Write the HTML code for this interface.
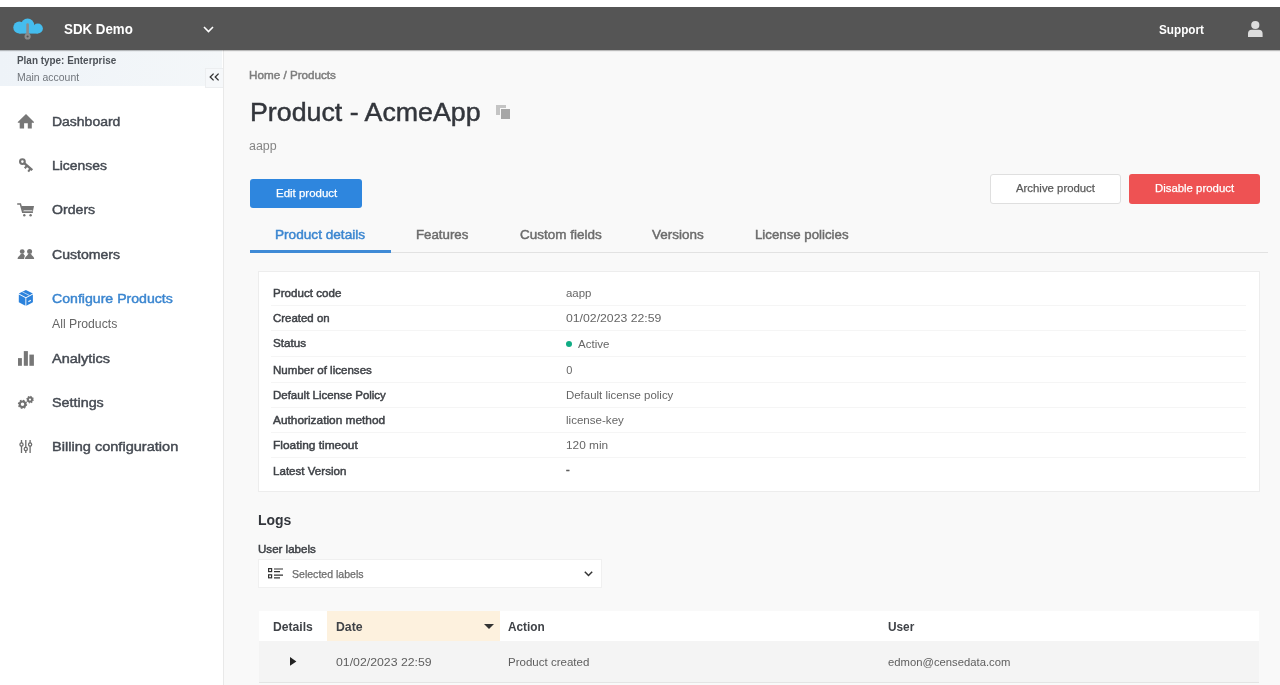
<!DOCTYPE html>
<html><head><meta charset="utf-8"><title>Product - AcmeApp</title>
<style>
*{box-sizing:border-box;margin:0;padding:0}
html,body{width:1280px;height:685px;overflow:hidden;background:#fff;font-family:"Liberation Sans",sans-serif;color:#333}
.a{position:absolute}
.t{position:absolute;white-space:nowrap;line-height:1;transform-origin:0 0}
#tx{position:absolute;left:0;top:0;width:1280px;height:685px;will-change:transform}
svg{position:absolute;overflow:visible}
.sep{position:absolute;left:270.5px;width:975.5px;height:1px;background:#f5f5f5}
</style></head><body>
<!-- layout blocks -->
<div class="a" style="left:224px;top:50px;width:1056px;height:635px;background:#f9f9f9"></div>
<div class="a" style="left:0;top:50px;width:224px;height:635px;background:#fff;border-right:1px solid #e9e9e9"></div>
<div class="a" style="left:0;top:50px;width:222px;height:36px;background:linear-gradient(90deg,#eef3f8,#f4f7f9)"></div>
<div class="a" style="left:205px;top:68px;width:18px;height:20px;background:#f6f8fa;border:1px solid #eceef0;border-right:none"></div>
<div class="a" style="left:0;top:7px;width:1280px;height:42.6px;background:#555;box-shadow:0 1px 1px rgba(0,0,0,.25)"></div>

<!-- logo -->
<svg style="left:0;top:0" width="60" height="50" viewBox="0 0 60 50">
 <g fill="#45bdee"><circle cx="19.3" cy="27.6" r="6"/><circle cx="27.6" cy="25.2" r="6.6"/><circle cx="37.8" cy="28.5" r="5.1"/><rect x="19.3" y="27" width="18.5" height="6.6"/></g>
 <rect x="26.3" y="23.2" width="2.6" height="11.8" rx="1.3" fill="#8c8c8c"/>
 <circle cx="27.6" cy="36.5" r="2.1" fill="none" stroke="#8c8c8c" stroke-width="2"/>
</svg>
<!-- header chevron -->
<svg style="left:203px;top:26px" width="11" height="7" viewBox="0 0 11 7"><path d="M1 1 L5.5 5.5 L10 1" fill="none" stroke="#fff" stroke-width="1.6"/></svg>
<!-- user icon -->
<svg style="left:1247px;top:20px" width="17" height="18" viewBox="0 0 17 18">
 <circle cx="8.3" cy="5" r="4.1" fill="#dcdcdc"/>
 <path d="M1 17 V13.5 A3.8 3.8 0 0 1 4.8 9.7 H11.8 A3.8 3.8 0 0 1 15.6 13.5 V17 Z" fill="#dcdcdc"/>
</svg>
<!-- collapse -->
<svg style="left:209px;top:73px" width="11" height="8" viewBox="0 0 11 8"><path d="M4.6 0.6 L1.2 4 L4.6 7.4 M9.6 0.6 L6.2 4 L9.6 7.4" fill="none" stroke="#333" stroke-width="1.3"/></svg>

<!-- nav icons -->
<svg style="left:0;top:100px" width="60" height="370" viewBox="0 100 60 370">
 <!-- home -->
 <path d="M26 114.1 L34 122 V122.7 H31.8 V128.6 H27.8 V123.2 H24.1 V128.6 H19.7 V122.7 H17.8 V122 Z" fill="#777"/>
 <!-- key -->
 <circle cx="22.4" cy="161.6" r="2.35" fill="none" stroke="#747474" stroke-width="2.1"/>
 <path d="M24.2 163.2 L32.3 170.2" stroke="#747474" stroke-width="2.4" fill="none"/>
 <path d="M27 165.6 L24.8 168.2 M30.5 168.7 L28.2 171.6" stroke="#747474" stroke-width="2.1" fill="none"/>
 <!-- cart -->
 <path d="M17.2 204 H20.4 L22.7 212.3 H32.9" fill="none" stroke="#757575" stroke-width="1.5"/>
 <path d="M21.2 206.1 H34 L32.9 211.6 H22.8 Z" fill="#757575"/>
 <path d="M23.6 210.5 H32.4" stroke="#d4d4d4" stroke-width="0.9" fill="none"/>
 <circle cx="24.3" cy="215.2" r="1.2" fill="#757575"/><circle cx="30.6" cy="215.2" r="1.2" fill="#757575"/>
 <!-- users -->
 <g fill="#767676">
  <circle cx="22.2" cy="251.6" r="2.4"/>
  <path d="M17.6 259 C17.8 256.2 19.9 255.9 20.8 254 H23.6 C23.9 254.8 24.4 255.3 25 255.7 C24.4 256.6 24.2 257.6 24.1 259 Z"/>
  <circle cx="29.6" cy="251.6" r="2.5"/>
  <path d="M25 259 C25.2 256.2 27.3 255.9 28.2 254 H31 C31.9 255.9 34 256.2 34.2 259 Z"/>
 </g>
 <!-- box -->
 <g fill="#2b82dc">
  <path d="M25.85 290 L32.9 293.5 L25.85 297.2 L18.8 293.5 Z"/>
  <path d="M18.8 294.6 L25.4 298 V305.8 L18.8 302.3 Z"/>
  <path d="M26.3 298 L32.9 294.6 V302.3 L26.3 305.8 Z"/>
 </g>
 <path d="M22.2 291.8 L29.4 295.4" stroke="#d5e6f8" stroke-width="0.8" fill="none"/>
 <path d="M28.4 301 L30.9 299.7 V300.9 L28.4 302.2 Z" fill="#fff"/>
 <!-- bars -->
 <g fill="#777"><rect x="18" y="358.1" width="3.9" height="7.7"/><rect x="23.8" y="351.1" width="4.1" height="14.7"/><rect x="29.4" y="354.6" width="4.5" height="11.2"/></g>
 <!-- gears -->
 <g fill="none" stroke="#727272">
  <circle cx="22.5" cy="404.3" r="2.8" stroke-width="2.1"/>
  <circle cx="22.5" cy="404.3" r="4" stroke-width="1.3" stroke-dasharray="1.57 1.571"/>
  <circle cx="30" cy="399.6" r="2.1" stroke-width="1.9"/>
  <circle cx="30" cy="399.6" r="3.2" stroke-width="1.2" stroke-dasharray="1.257 1.256"/>
 </g>
 <!-- sliders -->
 <g stroke="#6c6c6c" stroke-width="1.3" fill="none"><path d="M21.5 440.1 V453 M25.8 440.1 V453 M30.1 440.1 V453"/></g>
 <g fill="#fff" stroke="#6c6c6c" stroke-width="1.25"><circle cx="21.5" cy="444.5" r="1.6"/><circle cx="25.8" cy="448.9" r="1.6"/><circle cx="30.1" cy="444.5" r="1.6"/></g>
</svg>

<!-- copy icon -->
<div class="a" style="left:496px;top:105px;width:10px;height:10px;background:#c4c4c4"></div>
<div class="a" style="left:499.5px;top:108px;width:11.5px;height:11.5px;background:#a6a6a6;border:1px solid #f9f9f9"></div>

<!-- buttons -->
<div class="a" style="left:249.5px;top:179px;width:112.5px;height:29px;background:#2e86de;border-radius:3px"></div>
<div class="a" style="left:990px;top:174px;width:130.5px;height:29.5px;background:#fff;border:1px solid #dfdfdf;border-radius:3px"></div>
<div class="a" style="left:1129px;top:174px;width:130.5px;height:29.5px;background:#ee5253;border-radius:3px"></div>

<!-- tabs -->
<div class="a" style="left:250px;top:252px;width:1018px;height:1px;background:#e2e2e2"></div>
<div class="a" style="left:249.5px;top:250.4px;width:141px;height:2.6px;background:#3f8ad6"></div>

<!-- card -->
<div class="a" style="left:258px;top:271px;width:1002px;height:220.6px;background:#fff;border:1px solid #ededed"></div>
<div class="sep" style="top:305px"></div><div class="sep" style="top:330px"></div><div class="sep" style="top:356px"></div>
<div class="sep" style="top:382px"></div><div class="sep" style="top:407px"></div><div class="sep" style="top:432px"></div><div class="sep" style="top:457px"></div>
<div class="a" style="left:565.5px;top:341px;width:6px;height:6px;border-radius:50%;background:#10ac84"></div>

<!-- select -->
<div class="a" style="left:258px;top:559px;width:344px;height:29px;background:#fff;border:1px solid #f0f0f0"></div>
<svg style="left:268px;top:568px" width="15" height="11" viewBox="0 0 15 11">
 <g fill="none" stroke="#333" stroke-width="1.2"><rect x="0.6" y="0.6" width="3" height="3"/><rect x="0.6" y="6.8" width="3" height="3"/>
 <path d="M6 1 H15 M6 3.6 H12 M6 7.2 H15 M6 9.8 H12"/></g>
</svg>
<svg style="left:584px;top:571px" width="9" height="6" viewBox="0 0 9 6"><path d="M0.8 0.8 L4.5 4.5 L8.2 0.8" fill="none" stroke="#333" stroke-width="1.5"/></svg>

<!-- table -->
<div class="a" style="left:258.5px;top:611px;width:1000.5px;height:30px;background:#fff"></div>
<div class="a" style="left:327px;top:611px;width:173px;height:30px;background:#fdf1de"></div>
<div class="a" style="left:258.5px;top:641px;width:1000.5px;height:42px;background:#f4f4f4;border-bottom:1px solid #e4e4e4"></div>
<svg style="left:484px;top:624px" width="10" height="5" viewBox="0 0 10 5"><path d="M0 0 H10 L5 5 Z" fill="#333"/></svg>
<svg style="left:290px;top:657px" width="7" height="9" viewBox="0 0 7 9"><path d="M0 0 L6.4 4.4 L0 8.8 Z" fill="#222"/></svg>

<div id="tx">
<div class="t" style="left:64.25px;top:21px;line-height:16px;font-size:14px;color:#fff;font-weight:bold;transform:translateY(-0.10px) scaleX(0.9508);">SDK Demo</div>
<div class="t" style="left:1158.85px;top:23px;line-height:14px;font-size:12px;color:#fff;font-weight:bold;transform:translateY(-0.40px) scaleX(0.9783);">Support</div>
<div class="t" style="left:17.45px;top:55px;line-height:11px;font-size:10.2px;color:#4d5258;font-weight:bold;transform:translateY(-0.50px) scaleX(0.9735);">Plan type: Enterprise</div>
<div class="t" style="left:17.42px;top:72px;line-height:11px;font-size:10.3px;color:#70757b;transform:translateY(-0.40px) scaleX(1.0141);">Main account</div>
<div class="t" style="left:51.81px;top:114px;line-height:15px;font-size:13.3px;color:#454a52;-webkit-text-stroke:0.45px;transform:translateY(0.20px) scaleX(1.0508);">Dashboard</div>
<div class="t" style="left:51.82px;top:158px;line-height:15px;font-size:13.3px;color:#454a52;-webkit-text-stroke:0.45px;transform:translateY(0.30px) scaleX(1.0454);">Licenses</div>
<div class="t" style="left:51.80px;top:202px;line-height:15px;font-size:13.3px;color:#454a52;-webkit-text-stroke:0.45px;transform:translateY(0.40px) scaleX(1.0621);">Orders</div>
<div class="t" style="left:51.81px;top:247px;line-height:15px;font-size:13.3px;color:#454a52;-webkit-text-stroke:0.45px;transform:translateY(-0.40px) scaleX(1.0586);">Customers</div>
<div class="t" style="left:51.80px;top:291px;line-height:15px;font-size:13.3px;color:#3b86d0;-webkit-text-stroke:0.45px;transform:translateY(-0.40px) scaleX(1.0618);">Configure Products</div>
<div class="t" style="left:51.92px;top:317px;line-height:14px;font-size:12px;color:#666;transform:translateY(0.40px) scaleX(1.0198);">All Products</div>
<div class="t" style="left:51.78px;top:351px;line-height:15px;font-size:13.3px;color:#454a52;-webkit-text-stroke:0.45px;transform:translateY(0.10px) scaleX(1.0892);">Analytics</div>
<div class="t" style="left:51.79px;top:395px;line-height:15px;font-size:13.3px;color:#454a52;-webkit-text-stroke:0.45px;transform:translateY(0.00px) scaleX(1.0774);">Settings</div>
<div class="t" style="left:51.78px;top:439px;line-height:15px;font-size:13.3px;color:#454a52;-webkit-text-stroke:0.45px;transform:translateY(0.20px) scaleX(1.0950);">Billing configuration</div>
<div class="t" style="left:249.35px;top:69px;line-height:12px;font-size:11px;color:#7d7d7d;-webkit-text-stroke:0.45px;transform:translateY(-0.10px) scaleX(1.0614);">Home / Products</div>
<div class="t" style="left:249.94px;top:98px;line-height:28px;font-size:25px;color:#33363c;-webkit-text-stroke:0.45px;transform:translateY(0.00px) scaleX(1.0708);">Product - AcmeApp</div>
<div class="t" style="left:249.30px;top:139px;line-height:14px;font-size:12px;color:#858585;transform:translateY(-0.50px) scaleX(1.0373);">aapp</div>
<div class="t" style="left:275.76px;top:187px;line-height:12px;font-size:11.5px;color:#fff;-webkit-text-stroke:0.25px;transform:translateY(-0.30px) scaleX(0.9967);">Edit product</div>
<div class="t" style="left:1015.67px;top:182px;line-height:12px;font-size:11.5px;color:#5a5a5a;-webkit-text-stroke:0.25px;transform:translateY(0.10px) scaleX(0.9883);">Archive product</div>
<div class="t" style="left:1154.87px;top:182px;line-height:12px;font-size:11.5px;color:#fff;-webkit-text-stroke:0.25px;transform:translateY(0.10px) scaleX(0.9896);">Disable product</div>
<div class="t" style="left:275.18px;top:227px;line-height:15px;font-size:12.8px;color:#3b86d0;-webkit-text-stroke:0.45px;transform:translateY(0.00px) scaleX(1.0642);">Product details</div>
<div class="t" style="left:416.45px;top:227px;line-height:15px;font-size:12.8px;color:#6c6c6c;-webkit-text-stroke:0.45px;transform:translateY(0.00px) scaleX(1.0361);">Features</div>
<div class="t" style="left:519.74px;top:227px;line-height:15px;font-size:12.8px;color:#6c6c6c;-webkit-text-stroke:0.45px;transform:translateY(0.00px) scaleX(1.0530);">Custom fields</div>
<div class="t" style="left:652.24px;top:227px;line-height:15px;font-size:12.8px;color:#6c6c6c;-webkit-text-stroke:0.45px;transform:translateY(0.00px) scaleX(1.0519);">Versions</div>
<div class="t" style="left:755.05px;top:227px;line-height:15px;font-size:12.8px;color:#6c6c6c;-webkit-text-stroke:0.45px;transform:translateY(0.00px) scaleX(1.0354);">License policies</div>
<div class="t" style="left:273.15px;top:287px;line-height:12px;font-size:10.9px;color:#3f4247;-webkit-text-stroke:0.45px;transform:translateY(-0.10px) scaleX(1.0648);">Product code</div>
<div class="t" style="left:273.16px;top:312px;line-height:12px;font-size:10.9px;color:#3f4247;-webkit-text-stroke:0.45px;transform:translateY(0.00px) scaleX(1.0511);">Created on</div>
<div class="t" style="left:273.15px;top:337px;line-height:12px;font-size:10.9px;color:#3f4247;-webkit-text-stroke:0.45px;transform:translateY(0.00px) scaleX(1.0735);">Status</div>
<div class="t" style="left:273.16px;top:364px;line-height:12px;font-size:10.9px;color:#3f4247;-webkit-text-stroke:0.45px;transform:translateY(-0.40px) scaleX(1.0604);">Number of licenses</div>
<div class="t" style="left:273.16px;top:389px;line-height:12px;font-size:10.9px;color:#3f4247;-webkit-text-stroke:0.45px;transform:translateY(-0.40px) scaleX(1.0531);">Default License Policy</div>
<div class="t" style="left:273.14px;top:414px;line-height:12px;font-size:10.9px;color:#3f4247;-webkit-text-stroke:0.45px;transform:translateY(0.00px) scaleX(1.0896);">Authorization method</div>
<div class="t" style="left:273.13px;top:439px;line-height:12px;font-size:10.9px;color:#3f4247;-webkit-text-stroke:0.45px;transform:translateY(0.30px) scaleX(1.0937);">Floating timeout</div>
<div class="t" style="left:273.15px;top:465px;line-height:12px;font-size:10.9px;color:#3f4247;-webkit-text-stroke:0.45px;transform:translateY(-0.30px) scaleX(1.0639);">Latest Version</div>
<div class="t" style="left:565.86px;top:287px;line-height:12px;font-size:11px;color:#666;transform:translateY(-0.10px) scaleX(1.0394);">aapp</div>
<div class="t" style="left:565.82px;top:312px;line-height:12px;font-size:11px;color:#666;transform:translateY(0.00px) scaleX(1.1134);">01/02/2023 22:59</div>
<div class="t" style="left:578.06px;top:338px;line-height:12px;font-size:11px;color:#666;transform:translateY(-0.20px) scaleX(1.0461);">Active</div>
<div class="t" style="left:566.19px;top:364px;line-height:12px;font-size:11px;color:#666;transform:translateY(-0.40px) scaleX(1.0000);">0</div>
<div class="t" style="left:565.96px;top:389px;line-height:12px;font-size:11px;color:#666;transform:translateY(-0.30px) scaleX(1.0388);">Default license policy</div>
<div class="t" style="left:565.86px;top:414px;line-height:12px;font-size:11px;color:#666;transform:translateY(0.00px) scaleX(1.0512);">license-key</div>
<div class="t" style="left:565.94px;top:439px;line-height:12px;font-size:11px;color:#666;transform:translateY(0.20px) scaleX(1.0769);">120 min</div>
<div class="t" style="left:565.89px;top:463px;line-height:12px;font-size:11px;color:#555;-webkit-text-stroke:0.45px;transform:translateY(0.20px) scaleX(1.0000);">-</div>
<div class="t" style="left:257.91px;top:512px;line-height:16px;font-size:14px;color:#33363c;font-weight:bold;transform:translateY(-0.30px) scaleX(0.9984);">Logs</div>
<div class="t" style="left:258.06px;top:543px;line-height:12px;font-size:10.9px;color:#3f4247;-webkit-text-stroke:0.45px;transform:translateY(-0.30px) scaleX(1.0617);">User labels</div>
<div class="t" style="left:292.32px;top:568px;line-height:12px;font-size:10.5px;color:#6c6c6c;-webkit-text-stroke:0.25px;transform:translateY(-0.50px) scaleX(1.0043);">Selected labels</div>
<div class="t" style="left:273.12px;top:620px;line-height:14px;font-size:12px;color:#3f4247;font-weight:bold;transform:translateY(-0.10px) scaleX(1.0112);">Details</div>
<div class="t" style="left:336.21px;top:620px;line-height:14px;font-size:12px;color:#3f4247;font-weight:bold;transform:translateY(-0.10px) scaleX(1.0225);">Date</div>
<div class="t" style="left:507.84px;top:620px;line-height:14px;font-size:12px;color:#3f4247;font-weight:bold;transform:translateY(-0.10px) scaleX(0.9854);">Action</div>
<div class="t" style="left:887.74px;top:620px;line-height:14px;font-size:12px;color:#3f4247;font-weight:bold;transform:translateY(-0.10px) scaleX(0.9855);">User</div>
<div class="t" style="left:336.01px;top:656px;line-height:12px;font-size:11.5px;color:#5e5e5e;transform:translateY(0.30px) scaleX(1.0686);">01/02/2023 22:59</div>
<div class="t" style="left:507.86px;top:656px;line-height:12px;font-size:11.5px;color:#5e5e5e;transform:translateY(0.30px) scaleX(1.0023);">Product created</div>
<div class="t" style="left:887.77px;top:656px;line-height:12px;font-size:11.5px;color:#5e5e5e;transform:translateY(0.30px) scaleX(0.9803);">edmon@censedata.com</div>
</div>
</body></html>
